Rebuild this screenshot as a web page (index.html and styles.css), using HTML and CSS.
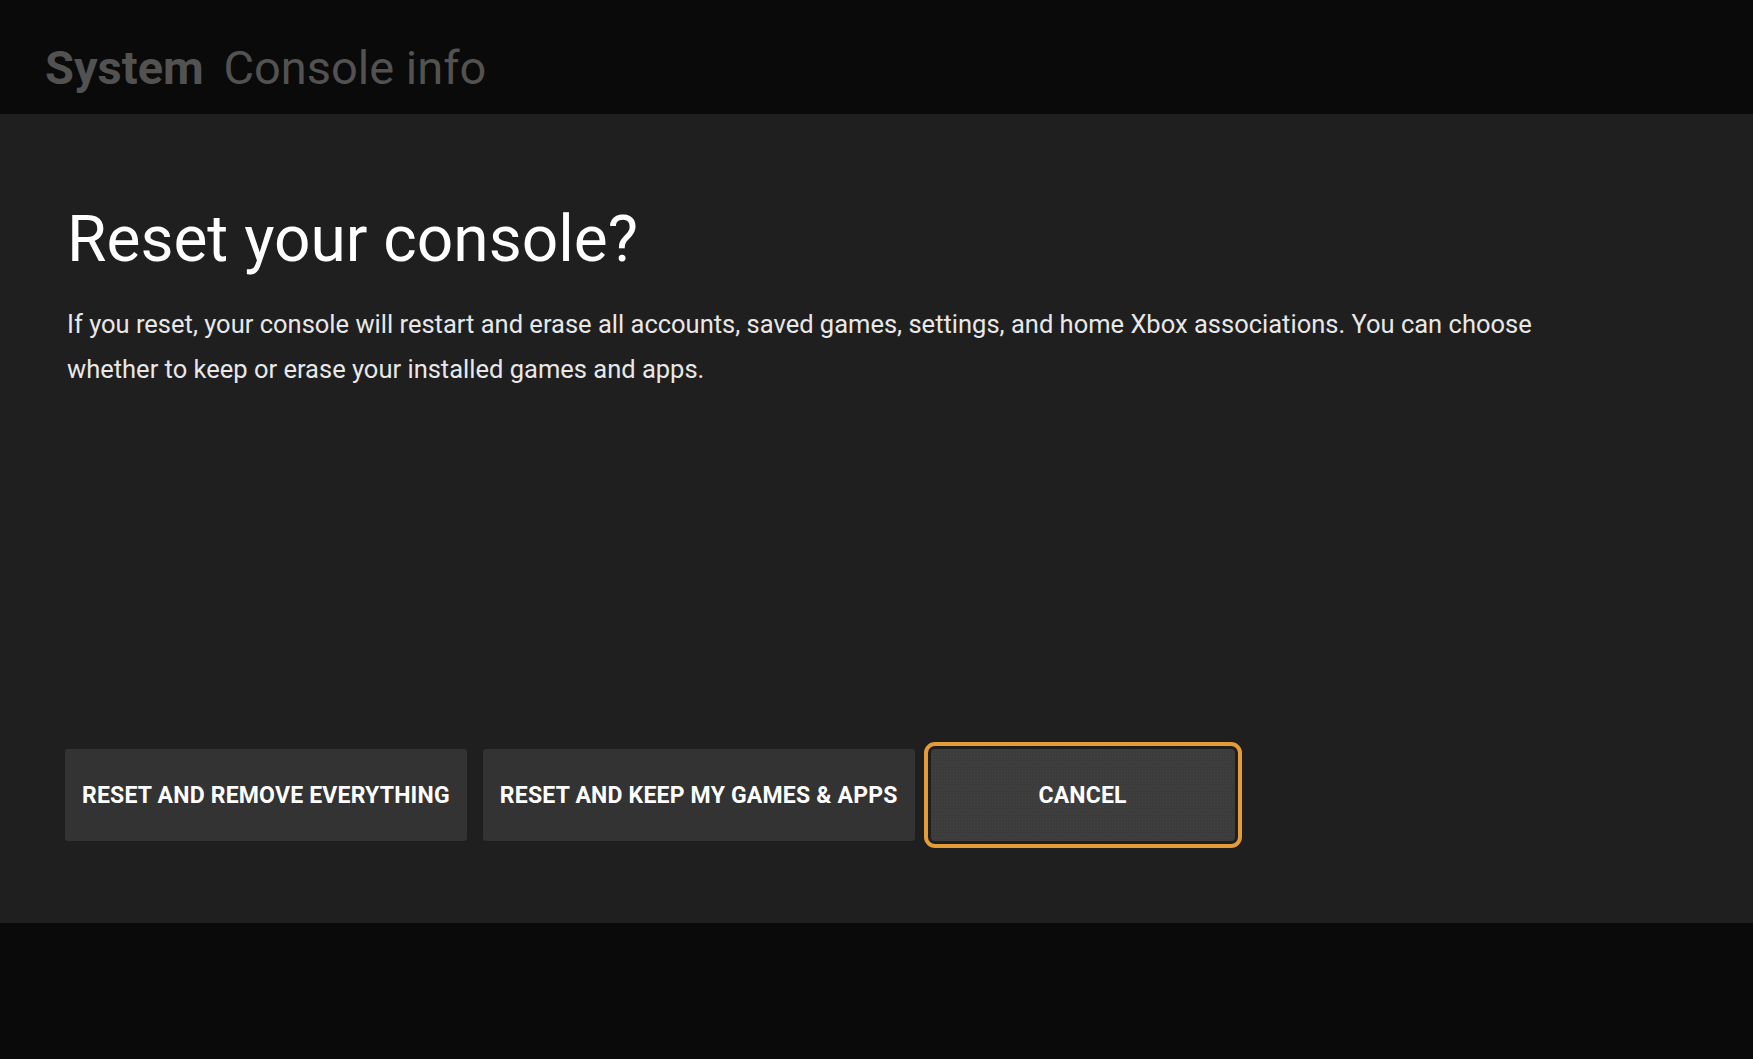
FILE: index.html
```html
<!DOCTYPE html>
<html lang="en">
<head>
    <meta charset="UTF-8">
    <meta name="viewport" content="width=device-width, initial-scale=1.0">
    <title>Reset your console?</title>
    <link rel="stylesheet" href="styles.css">
</head>
<body>
    <header class="top-bar">
        <span class="crumb-main">System</span>
        <span class="crumb-sub">Console info</span>
    </header>

    <main class="dialog">
        <h1 class="dialog-title">Reset your console?</h1>
        <p class="dialog-text">If you reset, your console will restart and erase all accounts, saved games, settings, and home Xbox associations. You can choose whether to keep or erase your installed games and apps.</p>

        <div class="dialog-actions">
            <button class="action">Reset and remove everything</button>
            <button class="action">Reset and keep my games &amp; apps</button>
            <button class="action action-cancel">Cancel</button>
        </div>
    </main>
</body>
</html>
```

FILE: styles.css
```css
/* Xbox style reset dialog */
body {
    margin: 0;
    background-color: #0a0a0a;
    font-family: Roboto, "Liberation Sans", sans-serif;
    height: 100vh;
    overflow: hidden;
}

.top-bar {
    height: 114px;
    box-sizing: border-box;
    padding: 40px 0 0 45px;
    font-size: 47px;
    color: #525252;
}

.crumb-main {
    font-weight: 700;
    margin-right: 8px;
}

.dialog {
    height: 809px;
    box-sizing: border-box;
    background-color: #1f1f1f;
    padding: 86px 67px 82px;
    display: flex;
    flex-direction: column;
}

.dialog-title {
    margin: 0;
    font-size: 64px;
    font-weight: 400;
    color: #ffffff;
    line-height: 80px;
}

.dialog-text {
    margin: 22px 0 0;
    max-width: 1500px;
    font-size: 25.5px;
    line-height: 45px;
    color: #e8e8e8;
}

.dialog-actions {
    margin-top: auto;
    margin-left: -2px;
    display: flex;
    gap: 16px;
}

.action {
    height: 92px;
    min-width: 300px;
    padding: 0 17px;
    border: none;
    border-radius: 3px;
    background-color: #333333;
    color: #ffffff;
    font-family: Roboto, "Liberation Sans", sans-serif;
    font-size: 23px;
    font-weight: 700;
    letter-spacing: 0.2px;
    text-transform: uppercase;
    cursor: pointer;
}

.action-cancel {
    width: 304px;
    background-color: #3c3c3c;
    background-image: radial-gradient(rgba(255, 255, 255, 0.04) 1px, transparent 1px); /* faint focus texture */
    background-size: 3px 3px;
    outline: 4px solid #e39c37;
    outline-offset: 3px;
    border-radius: 4px;
}
```
